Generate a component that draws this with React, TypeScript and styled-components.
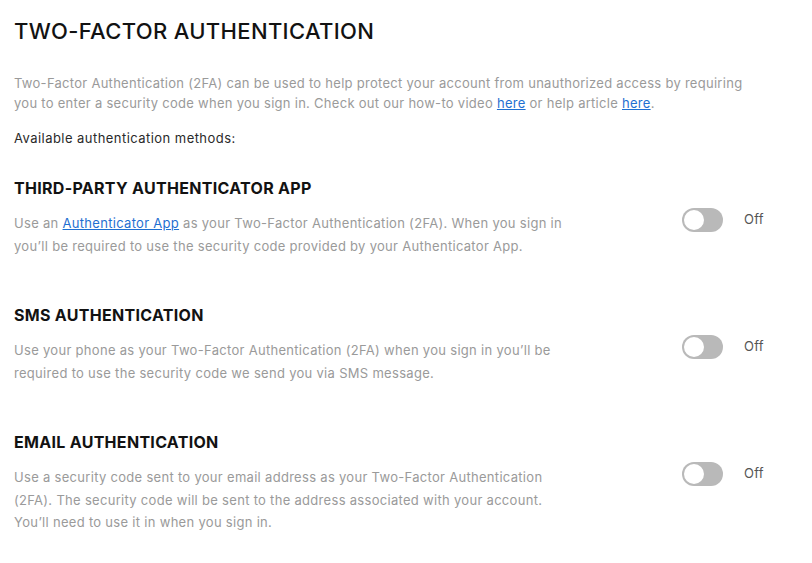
import React from "react";
import styled, { createGlobalStyle } from "styled-components";

const GlobalStyle = createGlobalStyle`
  body {
    margin: 0;
    background: #ffffff;
    font-family: Inter, "Noto Sans", "Liberation Sans", sans-serif;
  }
`;

const Page = styled.main`
  padding: 16px 14px 20px;
  color: #1a1a1a;
`;

const Title = styled.h1`
  margin: 0;
  font-size: 22px;
  line-height: 30px;
  font-weight: 500;
  letter-spacing: 0.35px;
  color: #121212;
`;

const Intro = styled.p`
  margin: 27px 0 0;
  font-size: 13px;
  line-height: 20px;
  letter-spacing: 0.28px;
  color: #9a9a9a;
  max-width: 745px;

  a {
    color: #1f6fd1;
    text-decoration: underline;
  }
`;

const Available = styled.p`
  margin: 15px 0 0;
  font-size: 13px;
  line-height: 20px;
  letter-spacing: 0.45px;
  color: #2a2a2a;
`;

const MethodList = styled.div`
  display: flex;
  flex-direction: column;
  gap: 46px;
  margin-top: 28px;
`;

const Method = styled.section``;

const MethodTitle = styled.h2`
  margin: 0;
  font-size: 16px;
  line-height: 24px;
  font-weight: 700;
  letter-spacing: 0.3px;
  color: #121212;
`;

const MethodRow = styled.div`
  display: flex;
  align-items: flex-start;
  margin-top: 12px;
`;

const Description = styled.p`
  margin: 0;
  width: 560px;
  font-size: 13px;
  line-height: 22.5px;
  letter-spacing: 0.3px;
  color: #9a9a9a;

  a {
    color: #1f6fd1;
    text-decoration: underline;
  }
`;

const ToggleWrap = styled.div`
  display: flex;
  align-items: center;
  gap: 21px;
  margin-left: 108px;
  margin-top: -4px;
`;

const Track = styled.button<{ $on?: boolean }>`
  position: relative;
  width: 41px;
  height: 24px;
  padding: 0;
  border: none;
  border-radius: 12px;
  background: ${(p) => (p.$on ? "#0078f2" : "#b9b9b9")};
  cursor: pointer;
`;

const Knob = styled.span<{ $on?: boolean }>`
  position: absolute;
  top: 2px;
  left: ${(p) => (p.$on ? "19px" : "2px")};
  width: 20px;
  height: 20px;
  border-radius: 50%;
  background: #ffffff;
`;

const State = styled.span`
  font-size: 13px;
  letter-spacing: 0.3px;
  color: #555555;
  margin-top: -2px;
`;

const Toggle: React.FC<{ on?: boolean }> = ({ on }) => (
  <ToggleWrap>
    <Track $on={on} aria-pressed={!!on}>
      <Knob $on={on} />
    </Track>
    <State>{on ? "On" : "Off"}</State>
  </ToggleWrap>
);

const App: React.FC = () => (
  <>
    <GlobalStyle />
    <Page>
      <Title>TWO-FACTOR AUTHENTICATION</Title>
      <Intro>
        Two-Factor Authentication (2FA) can be used to help protect your account from unauthorized access by requiring
        you to enter a security code when you sign in. Check out our how-to video <a href="#video">here</a> or help
        article <a href="#article">here</a>.
      </Intro>
      <Available>Available authentication methods:</Available>

      <MethodList>
        <Method>
          <MethodTitle>THIRD-PARTY AUTHENTICATOR APP</MethodTitle>
          <MethodRow>
            <Description>
              Use an <a href="#app">Authenticator App</a> as your Two-Factor Authentication (2FA). When you sign in
              you’ll be required to use the security code provided by your Authenticator App.
            </Description>
            <Toggle />
          </MethodRow>
        </Method>

        <Method>
          <MethodTitle>SMS AUTHENTICATION</MethodTitle>
          <MethodRow>
            <Description>
              Use your phone as your Two-Factor Authentication (2FA) when you sign in you’ll be required to use the
              security code we send you via SMS message.
            </Description>
            <Toggle />
          </MethodRow>
        </Method>

        <Method>
          <MethodTitle>EMAIL AUTHENTICATION</MethodTitle>
          <MethodRow>
            <Description>
              Use a security code sent to your email address as your Two-Factor Authentication (2FA). The security
              code will be sent to the address associated with your account. You’ll need to use it in when you sign in.
            </Description>
            <Toggle />
          </MethodRow>
        </Method>
      </MethodList>
    </Page>
  </>
);

export default App;
